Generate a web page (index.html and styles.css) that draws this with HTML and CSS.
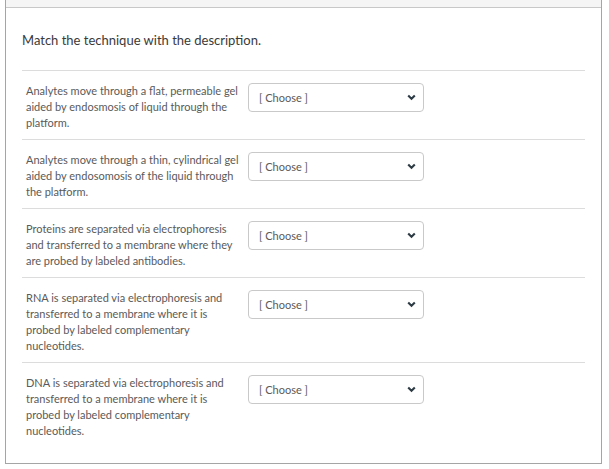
FILE: index.html
```html
<!DOCTYPE html>
<html>
<head>
<meta charset="utf-8">
<link rel="stylesheet" href="styles.css">
</head>
<body>
<div class="question">
  <div class="question-header"></div>
  <div class="question-body">
    <p class="prompt">Match the technique with the description.</p>
    <div class="match-row">
      <div class="desc">Analytes move through a flat, permeable gel aided by endosmosis of liquid through the platform.</div>
      <div class="select"><span>[ Choose ]</span><svg class="chev" width="9" height="7" viewBox="0 0 9 7"><path d="M1.2 1.5 L4.5 4.8 L7.8 1.5" fill="none" stroke="#2d3b45" stroke-width="2.1"/></svg></div>
    </div>
    <div class="match-row">
      <div class="desc">Analytes move through a thin, cylindrical gel aided by endosomosis of the liquid through the platform.</div>
      <div class="select"><span>[ Choose ]</span><svg class="chev" width="9" height="7" viewBox="0 0 9 7"><path d="M1.2 1.5 L4.5 4.8 L7.8 1.5" fill="none" stroke="#2d3b45" stroke-width="2.1"/></svg></div>
    </div>
    <div class="match-row">
      <div class="desc">Proteins are separated via electrophoresis and transferred to a membrane where they are probed by labeled antibodies.</div>
      <div class="select"><span>[ Choose ]</span><svg class="chev" width="9" height="7" viewBox="0 0 9 7"><path d="M1.2 1.5 L4.5 4.8 L7.8 1.5" fill="none" stroke="#2d3b45" stroke-width="2.1"/></svg></div>
    </div>
    <div class="match-row">
      <div class="desc">RNA is separated via electrophoresis and transferred to a membrane where it is probed by labeled complementary nucleotides.</div>
      <div class="select"><span>[ Choose ]</span><svg class="chev" width="9" height="7" viewBox="0 0 9 7"><path d="M1.2 1.5 L4.5 4.8 L7.8 1.5" fill="none" stroke="#2d3b45" stroke-width="2.1"/></svg></div>
    </div>
    <div class="match-row">
      <div class="desc">DNA is separated via electrophoresis and transferred to a membrane where it is probed by labeled complementary nucleotides.</div>
      <div class="select"><span>[ Choose ]</span><svg class="chev" width="9" height="7" viewBox="0 0 9 7"><path d="M1.2 1.5 L4.5 4.8 L7.8 1.5" fill="none" stroke="#2d3b45" stroke-width="2.1"/></svg></div>
    </div>
  </div>
</div>
</body>
</html>
```

FILE: styles.css
```css
html, body {
  margin: 0;
  padding: 0;
  background: #ffffff;
}

body {
  font-family: Lato, "Open Sans", "Liberation Sans", sans-serif;
  color: #555555;
}

.question {
  box-sizing: border-box;
  width: 597px;
  height: 464px;
  margin-left: 5px;
  border: 1px solid #a5a5a5;
  border-top: none;
}

.question-header {
  height: 7px;
  background: #f5f5f5;
  border-bottom: 1px solid #c8c8c8;
}

.question-body {
  padding: 23px 16px 15px 16px;
}

.prompt {
  margin: 0 0 21px 0;
  font-size: 13px;
  line-height: 18px;
  color: #3a3a3a;
}

.match-row {
  display: flex;
  align-items: flex-start;
  gap: 8px;
  border-top: 1px solid #dcdcdc;
  padding: 12px 0 8px 4px;
}

.desc {
  width: 214px;
  font-size: 11px;
  line-height: 16px;
  color: #5a5a5a;
}

.select {
  box-sizing: border-box;
  width: 176px;
  height: 29px;
  border: 1px solid #c9c9c9;
  border-radius: 4px;
  display: flex;
  align-items: center;
  justify-content: space-between;
  padding: 0 7px 0 10px;
  font-size: 11px;
  color: #5a5a5a;
}

.chev {
  display: block;
}
```
